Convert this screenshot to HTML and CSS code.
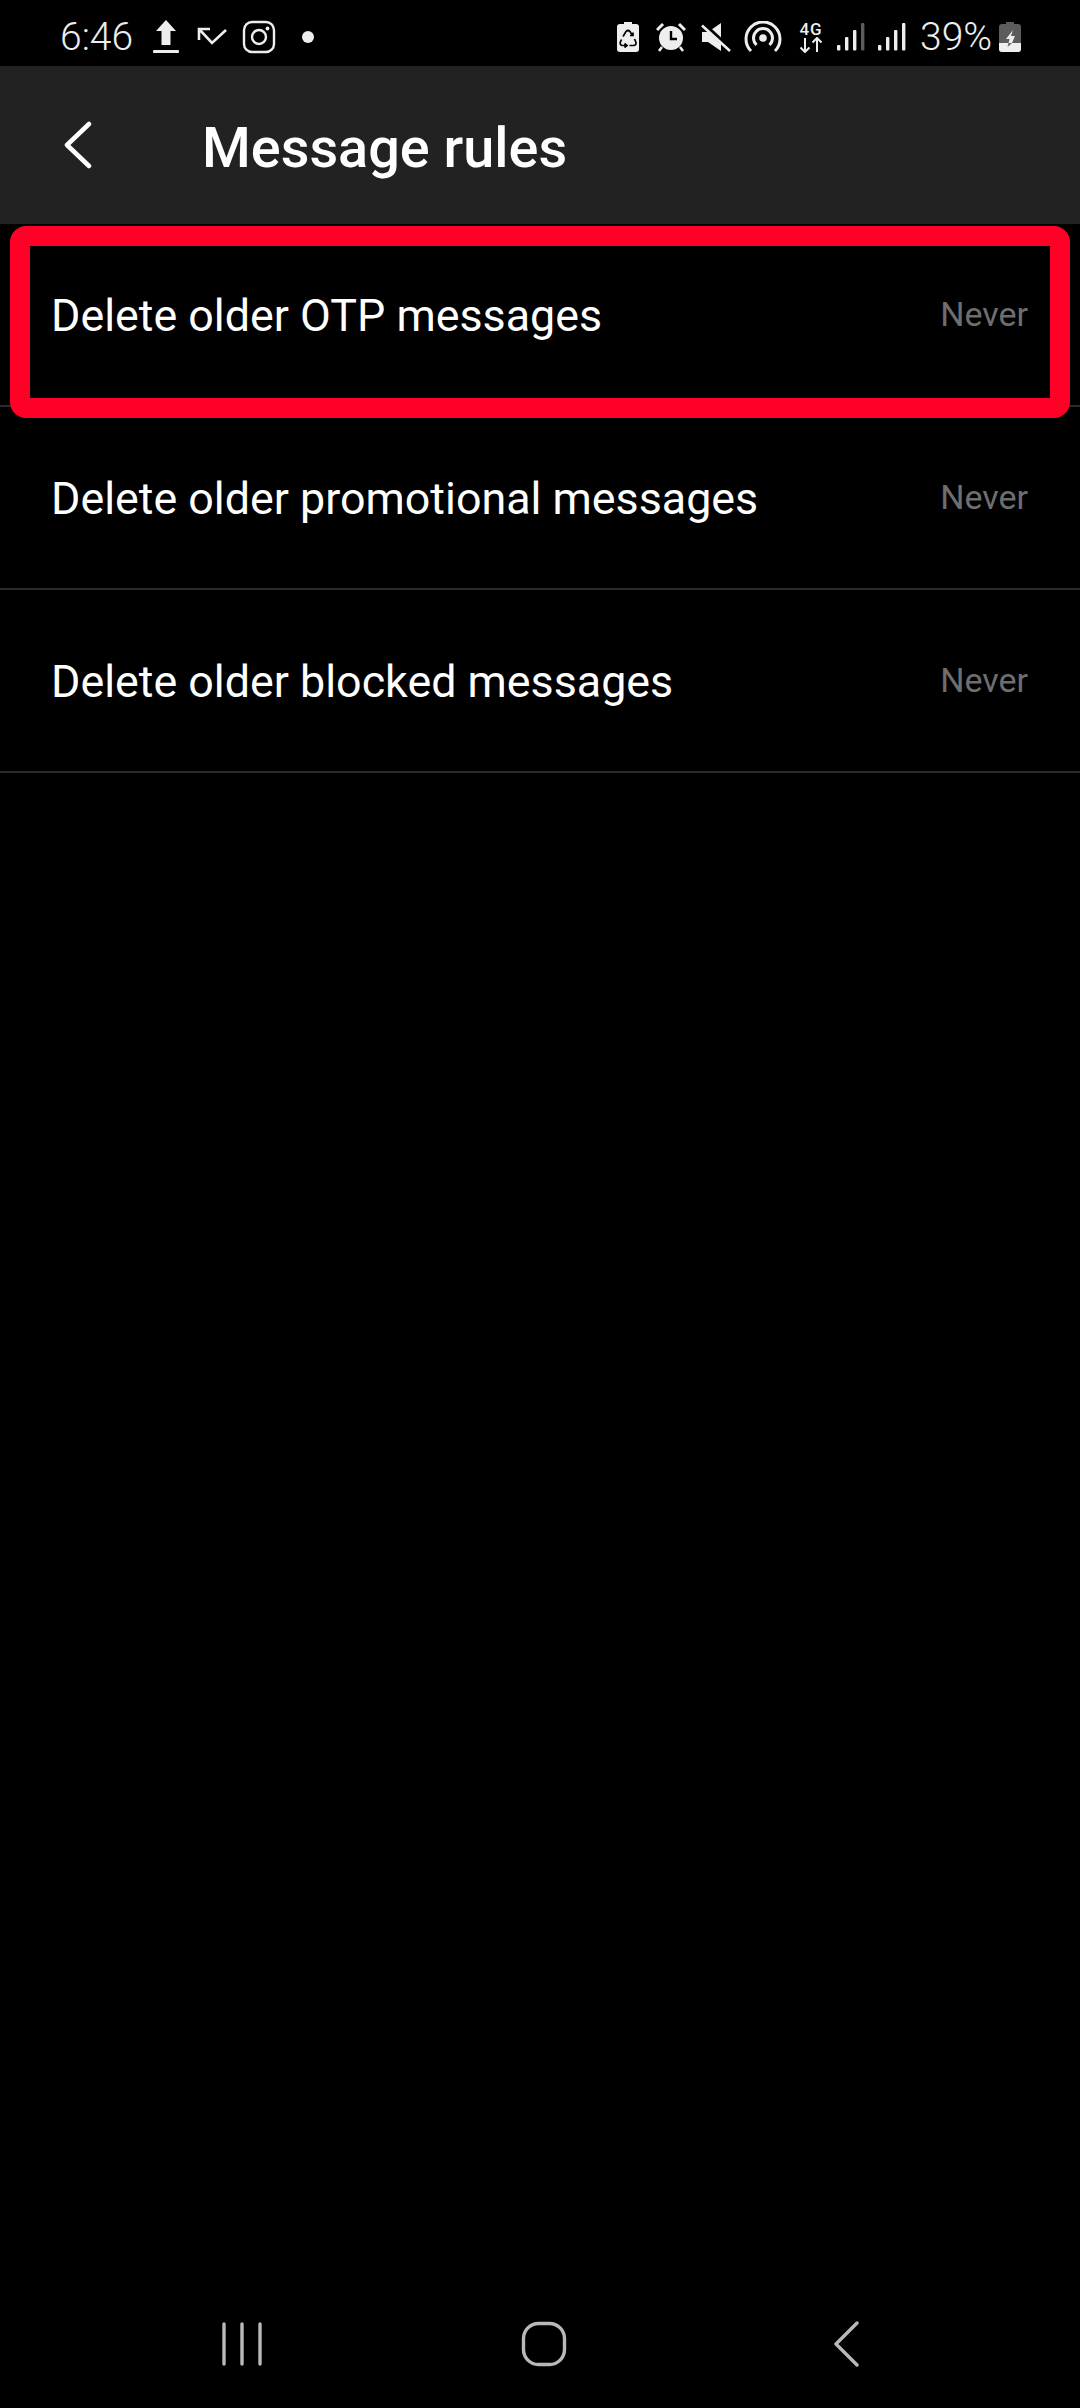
FILE: index.html
```html
<!DOCTYPE html>
<html lang="en">
<head>
    <meta charset="UTF-8">
    <meta name="viewport" content="width=device-width, initial-scale=1.0">
    <title>Message rules</title>
    <link rel="stylesheet" href="styles.css">
</head>
<body>
    <!-- Status bar -->
    <div class="status-bar">
        <div class="status-left">
            <span class="time">6:46</span>
            <svg class="icon-upload" width="26" height="36" viewBox="0 0 26 36"><path d="M13 1 L23 12 H17.500 V26 H8.500 V12 H3 Z" fill="#eee"/><rect x="0" y="31" width="26" height="3" rx="1" fill="#eee"/></svg>
            <svg class="icon-missed" width="30" height="20" viewBox="0 0 30 20"><path d="M2 13 V2 H13 M2 2 L15 16 L29 3" fill="none" stroke="#eee" stroke-width="2.600"/></svg>
            <svg class="icon-insta" width="34" height="34" viewBox="0 0 34 34"><rect x="2" y="2" width="30" height="30" rx="8" fill="none" stroke="#eee" stroke-width="2.400"/><circle cx="17" cy="17" r="7" fill="none" stroke="#eee" stroke-width="2.400"/><circle cx="25.500" cy="8.500" r="1.900" fill="#eee"/></svg>
            <span class="dot"></span>
        </div>
        <div class="status-right">
            <svg class="icon-saver" width="22" height="32" viewBox="0 0 22 32"><path d="M7 1 H15 V3 H19 Q22 3 22 6 V28 Q22 31 19 31 H3 Q0 31 0 28 V6 Q0 3 3 3 H7 Z" fill="#eee"/><path d="M6 15.500 L9 10.500 Q11 8.500 13 10.500 L15.500 14.500 M13 14.500 H16 V11.500 M4.500 18.500 L3.200 21.500 Q3 24.500 5.500 24.500 H9.500 M7.500 22.500 L10 24.500 L7.500 26.500 M17.500 18 L19 21.500 Q19.300 24.500 16.500 24.500 H12.500" fill="none" stroke="#000" stroke-width="1.700"/></svg>
            <svg class="icon-alarm" width="30" height="30" viewBox="0 0 30 30"><path d="M1 8 L7 2 M29 8 L23 2" stroke="#eee" stroke-width="3" fill="none"/><path d="M6 25 L3 29 M24 25 L27 29" stroke="#eee" stroke-width="2.600" fill="none"/><circle cx="15" cy="16" r="12" fill="#eee"/><path d="M15 9 V17 H21" fill="none" stroke="#000" stroke-width="2.400"/></svg>
            <svg class="icon-mute" width="30" height="30" viewBox="0 0 30 30"><path d="M1 10 H7 L20 1 V29 L7 20 H1 Z" fill="#eee"/><path d="M3 3 L31 29" stroke="#000" stroke-width="5"/><path d="M1 3.500 L29 29" stroke="#eee" stroke-width="2.600"/></svg>
            <svg class="icon-hotspot" width="38" height="32" viewBox="0 0 38 32"><path d="M7 30 A17 17 0 1 1 31 30" fill="none" stroke="#eee" stroke-width="3"/><path d="M12.500 24 A9.500 9.500 0 1 1 25.500 24" fill="none" stroke="#eee" stroke-width="3"/><circle cx="19" cy="17" r="3.800" fill="#eee"/></svg>
            <div class="net">
                <span class="net-label">4G</span>
                <svg width="26" height="16" viewBox="0 0 26 16"><path d="M7 1 V15 M2.500 10.500 L7 15 L11.500 10.500 M19 15 V1 M14.500 5.500 L19 1 L23.500 5.500" fill="none" stroke="#eee" stroke-width="2"/></svg>
            </div>
            <svg class="icon-signal" width="28" height="30" viewBox="0 0 28 30"><rect x="0" y="23" width="3.400" height="5.500" rx="1" fill="#eee"/><rect x="8" y="15" width="3.400" height="13.500" rx="1" fill="#eee"/><rect x="16" y="8" width="3.400" height="20.500" rx="1" fill="#eee"/><rect x="24" y="1" width="3.400" height="27.500" rx="1" fill="#5c5c5c"/></svg>
            <svg class="icon-signal" width="28" height="30" viewBox="0 0 28 30"><rect x="0" y="23" width="3.400" height="5.500" rx="1" fill="#eee"/><rect x="8" y="15" width="3.400" height="13.500" rx="1" fill="#eee"/><rect x="16" y="8" width="3.400" height="20.500" rx="1" fill="#eee"/><rect x="24" y="1" width="3.400" height="27.500" rx="1" fill="#eee"/></svg>
            <span class="battery-text">39%</span>
            <svg class="icon-battery" width="22" height="32" viewBox="0 0 22 32"><path d="M7 1 H15 V3 H19 Q22 3 22 6 V28 Q22 31 19 31 H3 Q0 31 0 28 V6 Q0 3 3 3 H7 Z" fill="#5c5c5c"/><path d="M0 22 H22 V28 Q22 31 19 31 H3 Q0 31 0 28 Z" fill="#eee"/><path d="M14 9 L7 18 H10.500 L9.600 22 H13 L16 15 H12 Z" fill="#eee"/><path d="M9.600 22 L8.500 26 L13 22 Z" fill="#5c5c5c"/></svg>
        </div>
    </div>

    <!-- Toolbar -->
    <div class="toolbar">
        <svg class="back-icon" width="28" height="48" viewBox="0 0 28 48"><path d="M25 3 L3 24 L25 45" fill="none" stroke="#fff" stroke-width="4.500" stroke-linecap="round" stroke-linejoin="round"/></svg>
        <h1>Message rules</h1>
    </div>

    <!-- List of rules -->
    <div class="rules-list">
        <div class="rule-row">
            <span class="rule-title">Delete older OTP messages</span>
            <span class="rule-value">Never</span>
        </div>
        <div class="rule-row">
            <span class="rule-title">Delete older promotional messages</span>
            <span class="rule-value">Never</span>
        </div>
        <div class="rule-row">
            <span class="rule-title">Delete older blocked messages</span>
            <span class="rule-value">Never</span>
        </div>
        <!-- Red highlight drawn over the first row -->
        <div class="highlight"></div>
    </div>

    <!-- Navigation bar -->
    <div class="nav-bar">
        <svg width="40" height="44" viewBox="0 0 40 44"><path d="M2 2 V42 M20 2 V42 M38 2 V42" fill="none" stroke="#b9b9b9" stroke-width="3.400" stroke-linecap="round"/></svg>
        <svg width="46" height="46" viewBox="0 0 46 46"><rect x="2.500" y="2.500" width="41" height="41" rx="15" fill="none" stroke="#b9b9b9" stroke-width="3.400"/></svg>
        <svg width="26" height="48" viewBox="0 0 26 48"><path d="M24 3 L3 24 L24 45" fill="none" stroke="#b9b9b9" stroke-width="3.400" stroke-linecap="round" stroke-linejoin="round"/></svg>
    </div>
</body>
</html>
```

FILE: styles.css
```css
* {
    margin: 0;
    padding: 0;
    box-sizing: border-box;
}

body {
    width: 1080px;
    height: 2408px;
    background: #000;
    color: #fff;
    font-family: Roboto, "Noto Sans", sans-serif;
    display: flex;
    flex-direction: column;
    overflow: hidden;
}

/* Status bar */
.status-bar {
    height: 66px;
    padding: 8px 59px 0 60px;
    display: flex;
    align-items: center;
    justify-content: space-between;
    color: #eee;
}

.status-left,
.status-right {
    display: flex;
    align-items: center;
}

.time {
    width: 73px;
    font-size: 39px;
    font-weight: 300;
}

.icon-upload {
    margin-left: 20px;
}

.icon-missed {
    margin-left: 18px;
}

.icon-insta {
    margin-left: 15px;
}

.dot {
    width: 12px;
    height: 12px;
    margin-left: 26px;
    border-radius: 50%;
    background: #eee;
}

.status-right .icon-alarm {
    margin-left: 17px;
}

.status-right .icon-mute {
    margin-left: 15px;
}

.status-right .icon-hotspot {
    margin-left: 13px;
}

.net {
    width: 26px;
    margin-left: 16px;
    display: flex;
    flex-direction: column;
    align-items: center;
}

.net svg {
    display: block;
}

.net-label {
    height: 16px;
    font-size: 17px;
    line-height: 16px;
    font-weight: 500;
    letter-spacing: 1px;
}

.status-right .icon-signal {
    margin-left: 13px;
}

.battery-text {
    width: 71px;
    margin-left: 14px;
    font-size: 39px;
    font-weight: 300;
}

.icon-battery {
    margin-left: 8px;
}

/* Toolbar */
.toolbar {
    height: 158px;
    background: #222;
    display: flex;
    align-items: center;
    padding-left: 64px;
}

.back-icon {
    flex: none;
}

.toolbar h1 {
    margin: 6px 0 0 110px;
    font-size: 55.800px;
    font-weight: 500;
}

/* Rules */
.rules-list {
    position: relative;
    flex: 1;
}

.rule-row {
    height: 183px;
    padding: 0 52px 0 51px;
    display: flex;
    align-items: center;
    justify-content: space-between;
    border-bottom: 2px solid #2b2b2b;
}

.rule-title {
    padding-top: 2px;
    font-size: 44.800px;
}

.rule-value {
    padding-bottom: 1px;
    font-size: 34px;
    color: #6e6e6e;
}

.highlight {
    position: absolute;
    left: 10px;
    top: 2px;
    width: 1060px;
    height: 192px;
    border: 20px solid #ff0027;
    border-radius: 16px;
}

/* Navigation bar */
.nav-bar {
    height: 126px;
    padding: 0 0 2px 91px;
    display: grid;
    grid-template-columns: repeat(3, 302px);
    justify-items: center;
    align-items: center;
}
```
